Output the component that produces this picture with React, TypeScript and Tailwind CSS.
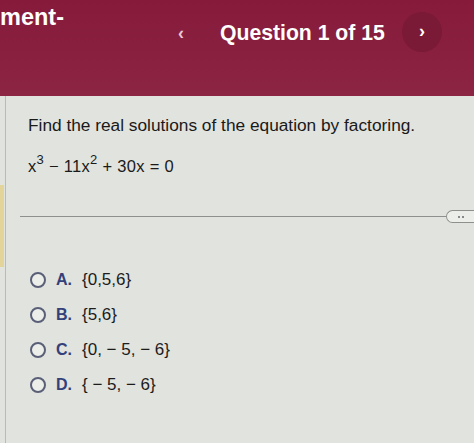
import React from "react";

const font = { fontFamily: '"Liberation Sans", Arial, sans-serif' };

function Radio() {
  return <span className="inline-block w-[16px] h-[16px] rounded-full border-[2px] border-[#5a5f78] bg-[#eceee9]" />;
}

function Option({ letter, value }: { letter: string; value: React.ReactNode }) {
  return (
    <div className="flex items-center h-[35px]">
      <Radio />
      <span className="ml-[10px] w-[26px] font-bold text-[16px] text-[#33407a]">{letter}</span>
      <span className="text-[17px] text-[#1c1c1c]">{value}</span>
    </div>
  );
}

export default function App() {
  return (
    <div className="w-[474px] h-[443px] overflow-hidden flex flex-col bg-[#e1e3de]" style={font}>
      <div className="h-[96px] shrink-0 bg-gradient-to-b from-[#861a3a] to-[#8c2444] relative">
        <div className="absolute left-0 top-[3px] text-white font-bold text-[23.5px] leading-[28px]">ment-</div>
        <div className="absolute left-[178px] top-[20px] text-[#e8c9d3] text-[18px] font-bold">‹</div>
        <div className="absolute left-[220px] top-[20px] text-white font-bold text-[21.2px] leading-[26px]">Question 1 of 15</div>
        <div className="absolute left-[402px] top-[12px] w-[40px] h-[40px] rounded-full bg-[#7a1a36] flex items-center justify-center text-white font-bold text-[18px] pb-[2px]">›</div>
      </div>
      <div className="flex-1 flex relative">
        <div className="absolute left-0 top-[89px] w-[4px] h-[82px] bg-[#e3d49a]" />
        <div className="w-[5px] shrink-0" />
        <div className="w-[1px] shrink-0 bg-[#b9bbb7]" />
        <div className="flex-1 flex flex-col">
          <div className="pl-[22px] pt-[18px] text-[17.3px] text-[#1a1a1a] leading-[22px]">
            Find the real solutions of the equation by factoring.
          </div>
          <div className="pl-[22px] pt-[18px] text-[16.5px] text-[#1a1a1a] leading-[24px] tracking-[0.3px]">
            x<sup className="text-[13px] top-[-0.6em]">3</sup> − 11x<sup className="text-[13px] top-[-0.6em]">2</sup> + 30x = 0
          </div>
          <div className="mt-[32px] flex items-center">
            <div className="ml-[14px] flex-1 h-[1px] bg-[#8e908d]" />
            <div className="w-[28px] h-[13px] rounded-l-[7px] border border-r-0 border-[#8e908d] bg-[#eceee9] flex items-center justify-center gap-[2px]">
              <span className="w-[2px] h-[2px] bg-[#666] rounded-full" />
              <span className="w-[2px] h-[2px] bg-[#666] rounded-full" />
            </div>
          </div>
          <div className="pl-[24px] pt-[39px] flex flex-col">
            <Option letter="A." value="{0,5,6}" />
            <Option letter="B." value="{5,6}" />
            <Option letter="C." value="{0, − 5, − 6}" />
            <Option letter="D." value="{ − 5, − 6}" />
          </div>
        </div>
      </div>
    </div>
  );
}
